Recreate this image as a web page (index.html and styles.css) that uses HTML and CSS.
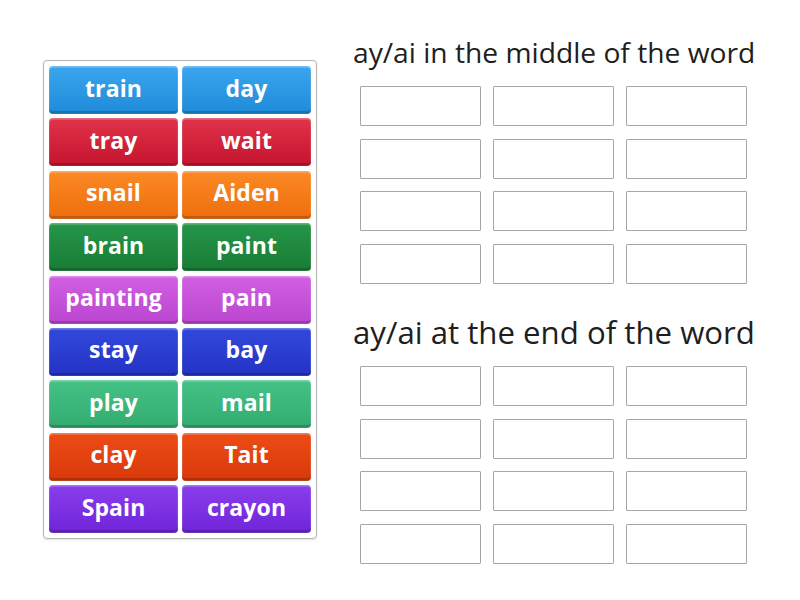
FILE: index.html
```html
<!DOCTYPE html>
<html>
<head>
<meta charset="utf-8">
<link rel="stylesheet" href="styles.css">
</head>
<body>
<div class="page">
  <div class="bank">
    <div class="tile c1">train</div>
    <div class="tile c1">day</div>
    <div class="tile c2">tray</div>
    <div class="tile c2">wait</div>
    <div class="tile c3">snail</div>
    <div class="tile c3">Aiden</div>
    <div class="tile c4">brain</div>
    <div class="tile c4">paint</div>
    <div class="tile c5">painting</div>
    <div class="tile c5">pain</div>
    <div class="tile c6">stay</div>
    <div class="tile c6">bay</div>
    <div class="tile c7">play</div>
    <div class="tile c7">mail</div>
    <div class="tile c8">clay</div>
    <div class="tile c8">Tait</div>
    <div class="tile c9">Spain</div>
    <div class="tile c9">crayon</div>
  </div>
  <div class="groups">
    <div class="group">
      <h2 class="title">ay/ai in the middle of the word</h2>
      <div class="slots">
        <div class="slot"></div><div class="slot"></div><div class="slot"></div>
        <div class="slot"></div><div class="slot"></div><div class="slot"></div>
        <div class="slot"></div><div class="slot"></div><div class="slot"></div>
        <div class="slot"></div><div class="slot"></div><div class="slot"></div>
      </div>
    </div>
    <div class="group">
      <h2 class="title title-wide">ay/ai at the end of the word</h2>
      <div class="slots">
        <div class="slot"></div><div class="slot"></div><div class="slot"></div>
        <div class="slot"></div><div class="slot"></div><div class="slot"></div>
        <div class="slot"></div><div class="slot"></div><div class="slot"></div>
        <div class="slot"></div><div class="slot"></div><div class="slot"></div>
      </div>
    </div>
  </div>
</div>
</body>
</html>
```

FILE: styles.css
```css
html, body {
  margin: 0;
  padding: 0;
  background: #ffffff;
}

body {
  width: 800px;
  height: 600px;
  overflow: hidden;
  font-family: "Open Sans", "DejaVu Sans", sans-serif;
}

.page {
  display: flex;
  align-items: flex-start;
  padding-left: 43px;
}

.bank {
  margin-top: 60px;
  width: 262px;
  padding: 5px;
  border: 1px solid #b4b4b4;
  border-radius: 4px;
  display: grid;
  grid-template-columns: 1fr 1fr;
  grid-auto-rows: 48px;
  column-gap: 4px;
  row-gap: 4.4px;
  box-shadow: 0 1px 2px rgba(0,0,0,0.12);
}

.tile {
  display: flex;
  align-items: center;
  justify-content: center;
  padding-bottom: 5px;
  box-sizing: border-box;
  border-radius: 4px;
  color: #ffffff;
  font-weight: 700;
  font-size: 23px;
  letter-spacing: 0.1px;
  box-shadow: inset 0 -3px 0 rgba(0,0,0,0.18), inset 0 0 0 1px rgba(255,255,255,0.12), inset 0 2px 0 rgba(255,255,255,0.18);
}

.c1 { background: linear-gradient(#3ba6ee, #1f8ad8); }
.c2 { background: linear-gradient(#e0334a, #c5142e); }
.c3 { background: linear-gradient(#fb8a26, #ee6d0c); }
.c4 { background: linear-gradient(#25964a, #187c34); }
.c5 { background: linear-gradient(#d060e2, #bb45d0); }
.c6 { background: linear-gradient(#3349dc, #2232c4); }
.c7 { background: linear-gradient(#45c286, #33ab6f); }
.c8 { background: linear-gradient(#ee4c16, #d8390a); }
.c9 { background: linear-gradient(#8a3eec, #6f24d8); }

.groups {
  margin-left: 36px;
  padding-top: 35px;
  display: flex;
  flex-direction: column;
  gap: 31.5px;
}

.title {
  margin: 0 0 17px 0;
  font-weight: 400;
  font-size: 28.2px;
  line-height: 34px;
  color: #1e1e1e;
  white-space: nowrap;
}

.title-wide {
  font-size: 31.2px;
}

.slots {
  margin-left: 7px;
  display: grid;
  grid-template-columns: repeat(3, 121px);
  grid-auto-rows: 40px;
  column-gap: 12px;
  row-gap: 12.5px;
}

.slot {
  border: 1px solid #a6a6a6;
  border-radius: 1px;
  background: #ffffff;
}
```
